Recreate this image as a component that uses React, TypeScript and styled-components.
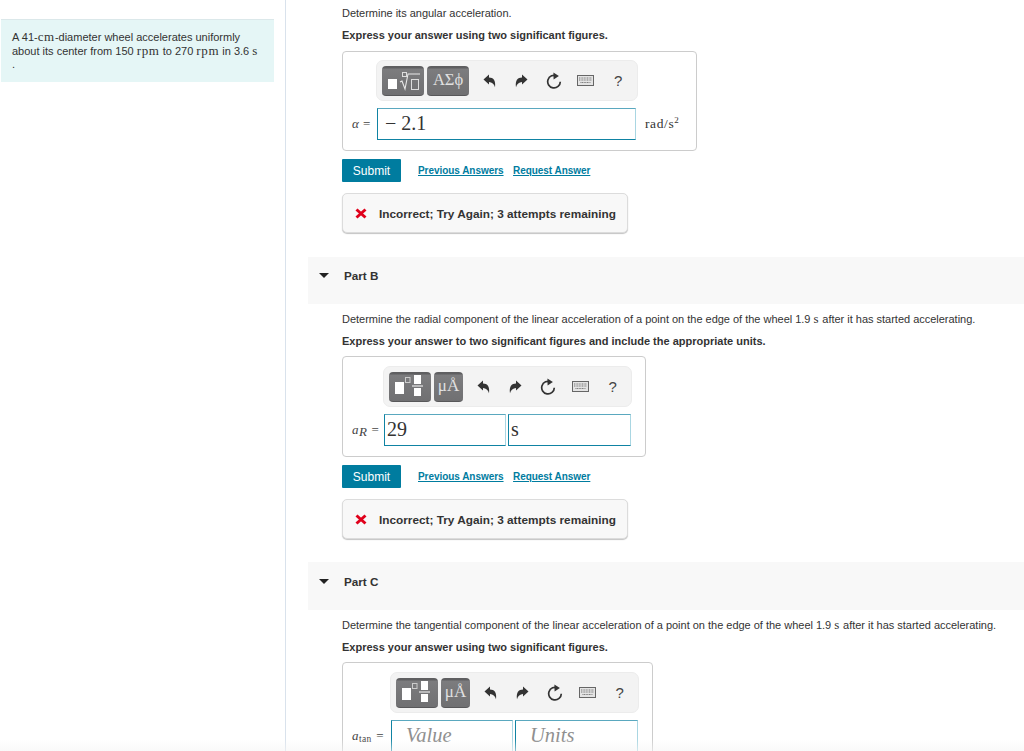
import React from "react";
import styled, { createGlobalStyle } from "styled-components";

const Global = createGlobalStyle`
  html, body { margin: 0; padding: 0; background: #fff; height: 751px; overflow: hidden; }
  body { font-family: "Liberation Sans", Arial, sans-serif; color: #333; -webkit-font-smoothing: antialiased; }
`;

const Page = styled.div`
  display: flex; width: 1024px; height: 751px; overflow: hidden; position: relative;
`;
const Side = styled.aside`
  width: 285px; flex: none; box-sizing: content-box; border-right: 1px solid #d9e2ec; padding-top: 19px;
`;
const Intro = styled.div`
  margin-left: 1px; width: 273px; height: 63px; box-sizing: border-box; background: #e5f6f6;
  border-top: 1px solid #dbe8ea; padding: 11px 11px 0; font-size: 11px; line-height: 13.5px; color: #333;
`;
const Unit = styled.span`
  font-family: "Liberation Serif", serif; font-size: 13px; letter-spacing: .65px; line-height: 0;
`;
const Main = styled.main`
  flex: 1; min-width: 0; padding: 6px 0 0 22px;
`;
const Body = styled.div`
  padding-left: 34px;
`;
const Prompt = styled.p`
  margin: 0; font-size: 11px; line-height: 14px; color: #333; white-space: nowrap; letter-spacing: -.012px;
`;
const Instruction = styled.p`
  margin: 8px 0 0; font-size: 11px; line-height: 14px; font-weight: 700; color: #333; white-space: nowrap;
`;
const Box = styled.div<{ $w: number; $h: number; $pad: number; $gap: number; $top: number }>`
  box-sizing: border-box; width: ${(p) => p.$w}px; height: ${(p) => p.$h}px; margin-top: ${(p) => p.$gap}px;
  border: 1px solid #ccc; border-radius: 4px; padding: ${(p) => p.$top}px 0 0 ${(p) => p.$pad}px;
`;
const Toolbar = styled.div<{ $w: number }>`
  box-sizing: border-box; width: ${(p) => p.$w}px; height: 41px; background: #f3f3f3; border: 1px solid #ececec;
  border-radius: 7px; display: flex; align-items: center; padding-left: 5px;
`;
const ToolButton = styled.div<{ $w: number; $big?: boolean }>`
  width: ${(p) => p.$w}px; height: 30px; margin-right: 3px; border-radius: 4px; flex: none;
  background: linear-gradient(#5f5f61 0, #5f5f61 2px, #7c7c7e 3px, #707072 100%); color: #e0e0e0;
  display: flex; align-items: center; justify-content: center;
  font-family: "Liberation Serif", serif; font-size: ${(p) => (p.$big ? 17 : 16.5)}px;
  border-bottom: 1px solid #58585a; box-sizing: border-box; white-space: nowrap;
`;
const ToolIcon = styled.div`
  width: 32.25px; flex: none; display: flex; align-items: center; justify-content: center;
  font-size: 15px; color: #444;
`;
const ToolStart = styled.div<{ $w: number }>`
  width: ${(p) => p.$w}px; flex: none;
`;
const Row = styled.div<{ $shift: number }>`
  display: flex; align-items: center; margin: 7px 0 0 -${(p) => p.$shift}px; height: 32px;
`;
const VarLabel = styled.div<{ $w: number }>`
  width: ${(p) => p.$w}px; flex: none; padding-left: 9px; box-sizing: border-box;
  font-family: "Liberation Serif", serif; font-size: 13px; color: #444; white-space: nowrap; letter-spacing: .3px;
  i { font-size: 13px; letter-spacing: .6px; }
  sub { font-size: 9.5px; vertical-align: -2px; line-height: 0; margin-right: 1px; }
`;
const Field = styled.div<{ $w: number; $ph?: boolean; $inset?: number }>`
  box-sizing: border-box; width: ${(p) => p.$w}px; height: 32px; flex: none; margin-right: 2px;
  border: 1px solid #0f83a3; border-right-color: #a9d6e2; border-top-color: #5aa8bf;
  padding: 0 0 2px ${(p) => p.$inset ?? 2}px; display: flex; align-items: center;
  font-family: "Liberation Serif", serif; font-size: ${(p) => (p.$ph ? 20.5 : 20)}px; color: ${(p) => (p.$ph ? "#8f8f8f" : "#333")};
  font-style: ${(p) => (p.$ph ? "italic" : "normal")}; white-space: pre;
`;
const UnitLabel = styled.div`
  margin-left: 7px; font-family: "Liberation Serif", serif; font-size: 13.5px; letter-spacing: .6px; color: #333;
  sup { font-size: 9px; line-height: 0; vertical-align: 5px; }
`;
const Actions = styled.div`
  display: flex; align-items: center; margin-top: 8px; height: 23px;
`;
const Submit = styled.button`
  width: 59px; height: 23px; border: 0; border-radius: 1px; padding: 0; background: #007c9f; color: #fff;
  font: 12px "Liberation Sans", sans-serif;
`;
const ActionLink = styled.a<{ $first?: boolean }>`
  margin-left: ${(p) => (p.$first ? 17 : 9.5)}px; font-size: 10px; font-weight: 700; color: #007c9f; text-decoration: underline;
  letter-spacing: -.05px; white-space: nowrap;
`;
const Feedback = styled.div`
  box-sizing: border-box; width: 286px; height: 40px; margin-top: 11px; background: #f8f8f8;
  border: 1px solid #dcdcdc; border-radius: 5px; box-shadow: 0 1px 1px #c4c4c4;
  display: flex; align-items: center; padding: 2px 0 0 12px; font-size: 11.8px; font-weight: 700; color: #333;
  white-space: nowrap;
  svg { margin: -2px 12px 0 0; }
`;
const PartHeader = styled.div<{ $top: number; $h: number }>`
  height: ${(p) => p.$h}px; margin-top: ${(p) => p.$top}px; background: #f8f8f8; display: flex; align-items: center;
  padding: 0 0 10px 11px; box-sizing: border-box; font-size: 11.7px; font-weight: 700; color: #333;
`;
const Caret = styled.span`
  width: 0; height: 0; border: 5px solid transparent; border-top: 5px solid #222; border-bottom: 0; margin-right: 15px;
`;
const PartBody = styled.div<{ $top: number }>`
  padding: ${(p) => p.$top}px 0 0 34px;
`;
const Fade = styled.div`
  position: absolute; left: 0; right: 0; bottom: 0; height: 12px;
  background: linear-gradient(rgba(255,255,255,0), rgba(245,245,245,.55));
  pointer-events: none;
`;

const Undo = ({ flip }: { flip?: boolean }) => (
  <svg width="13" height="14" viewBox="0 0 13 14" style={flip ? { transform: "scaleX(-1)" } : undefined}>
    <path d="M.5 5.5 6 .5v3c4.4 0 7 3 6 9.8-.9-3.6-3-5.200-6-5.400v2.700z" fill="#333" />
  </svg>
);
const Reset = () => (
  <svg width="16" height="17" viewBox="0 0 16 17">
    <path d="M10.800 4A6.300 6.300 0 1 0 14.300 9.700" fill="none" stroke="#333" strokeWidth="1.700" />
    <path d="M7.400 .6 12.900 4 7.600 7.400z" fill="#333" />
  </svg>
);
const Keyboard = () => (
  <svg width="17" height="11" viewBox="0 0 17 11">
    <rect x=".5" y=".5" width="16" height="10" fill="#e4e4e4" stroke="#666" />
    <path d="M2 3h13M2 5h13M3.500 7.500h10" stroke="#777" strokeWidth="1.200" strokeDasharray="1 .6" />
  </svg>
);
const Templates = () => (
  <svg width="42" height="29" viewBox="0 0 42 29">
    <rect x="6" y="13" width="9" height="10" fill="#fff" />
    <rect x="20.500" y="6.500" width="4" height="4" fill="none" stroke="#ddd" />
    <path d="M18 16l2-1 3 8 3-15h12" fill="none" stroke="#e8e8e8" strokeWidth="1.100" />
    <rect x="29.500" y="13.500" width="7" height="10" fill="none" stroke="#ddd" />
  </svg>
);
const Fractions = () => (
  <svg width="42" height="29" viewBox="0 0 42 29">
    <rect x="6" y="10" width="9" height="12" fill="#fff" />
    <rect x="16.500" y="5.500" width="4.500" height="5" fill="none" stroke="#ccc" />
    <rect x="25" y="3" width="7" height="9" fill="#fff" />
    <path d="M23 14h11" stroke="#fff" />
    <rect x="25" y="16" width="7" height="8" fill="#fff" />
  </svg>
);

const Tools = ({ kind, w }: { kind: "root" | "frac"; w: number }) => (
  <Toolbar $w={w}>
    <ToolButton $w={42}>{kind === "root" ? <Templates /> : <Fractions />}</ToolButton>
    {kind === "root" ? <ToolButton $w={42}>ΑΣϕ</ToolButton> : <ToolButton $w={29} $big>μÅ</ToolButton>}
    <ToolStart $w={kind === "root" ? 1 : 1.500} />
    <ToolIcon><Undo /></ToolIcon>
    <ToolIcon><Undo flip /></ToolIcon>
    <ToolIcon><Reset /></ToolIcon>
    <ToolIcon><Keyboard /></ToolIcon>
    <ToolIcon>?</ToolIcon>
  </Toolbar>
);

const Cross = () => (
  <svg width="12" height="11" viewBox="0 0 12 11">
    <path d="M1.500 1.500 10.500 9.500M10.500 1.500 1.500 9.500" stroke="#e0001b" strokeWidth="3" />
  </svg>
);

const Result = () => (
  <>
    <Actions>
      <Submit>Submit</Submit>
      <ActionLink $first>Previous Answers</ActionLink>
      <ActionLink>Request Answer</ActionLink>
    </Actions>
    <Feedback><Cross />Incorrect; Try Again; 3 attempts remaining</Feedback>
  </>
);

export default function App() {
  return (
    <Page>
      <Global />
      <Side>
        <Intro>
          A 41-<Unit>cm</Unit>-diameter wheel accelerates uniformly<br />
          about its center from 150 <Unit>rpm</Unit> to 270 <Unit>rpm</Unit> in 3.6 <Unit>s</Unit><br />.
        </Intro>
      </Side>
      <Main>
        <Body>
          <Prompt>Determine its angular acceleration.</Prompt>
          <Instruction>Express your answer using two significant figures.</Instruction>
          <Box $w={355} $h={100} $pad={33} $gap={9} $top={8}>
            <Tools kind="root" w={262} />
            <Row $shift={33}>
              <VarLabel $w={34}><i>α</i> =</VarLabel>
              <Field $w={259} $inset={7}>− 2.1</Field>
              <UnitLabel>rad/s<sup>2</sup></UnitLabel>
            </Row>
          </Box>
          <Result />
        </Body>
        <PartHeader $top={24} $h={47}><Caret />Part B</PartHeader>
        <PartBody $top={8}>
          <Prompt>Determine the radial component of the linear acceleration of a point on the edge of the wheel 1.9 <Unit>s</Unit> after it has started accelerating.</Prompt>
          <Instruction>Express your answer to two significant figures and include the appropriate units.</Instruction>
          <Box $w={304} $h={101} $pad={40} $gap={8} $top={9}>
            <Tools kind="frac" w={249} />
            <Row $shift={40}>
              <VarLabel $w={41}><i>a</i><sub><i>R</i></sub>{"\u2009"}=</VarLabel>
              <Field $w={122}>29</Field>
              <Field $w={123}>s</Field>
            </Row>
          </Box>
          <Result />
        </PartBody>
        <PartHeader $top={23} $h={48}><Caret />Part C</PartHeader>
        <PartBody $top={8}>
          <Prompt>Determine the tangential component of the linear acceleration of a point on the edge of the wheel 1.9 <Unit>s</Unit> after it has started accelerating.</Prompt>
          <Instruction>Express your answer using two significant figures.</Instruction>
          <Box $w={311} $h={120} $pad={47} $gap={8} $top={9}>
            <Tools kind="frac" w={249} />
            <Row $shift={47}>
              <VarLabel $w={48}><i>a</i><sub>tan</sub> =</VarLabel>
              <Field $w={122} $ph $inset={14}>Value</Field>
              <Field $w={123} $ph $inset={14}>Units</Field>
            </Row>
          </Box>
        </PartBody>
      </Main>
      <Fade />
    </Page>
  );
}
